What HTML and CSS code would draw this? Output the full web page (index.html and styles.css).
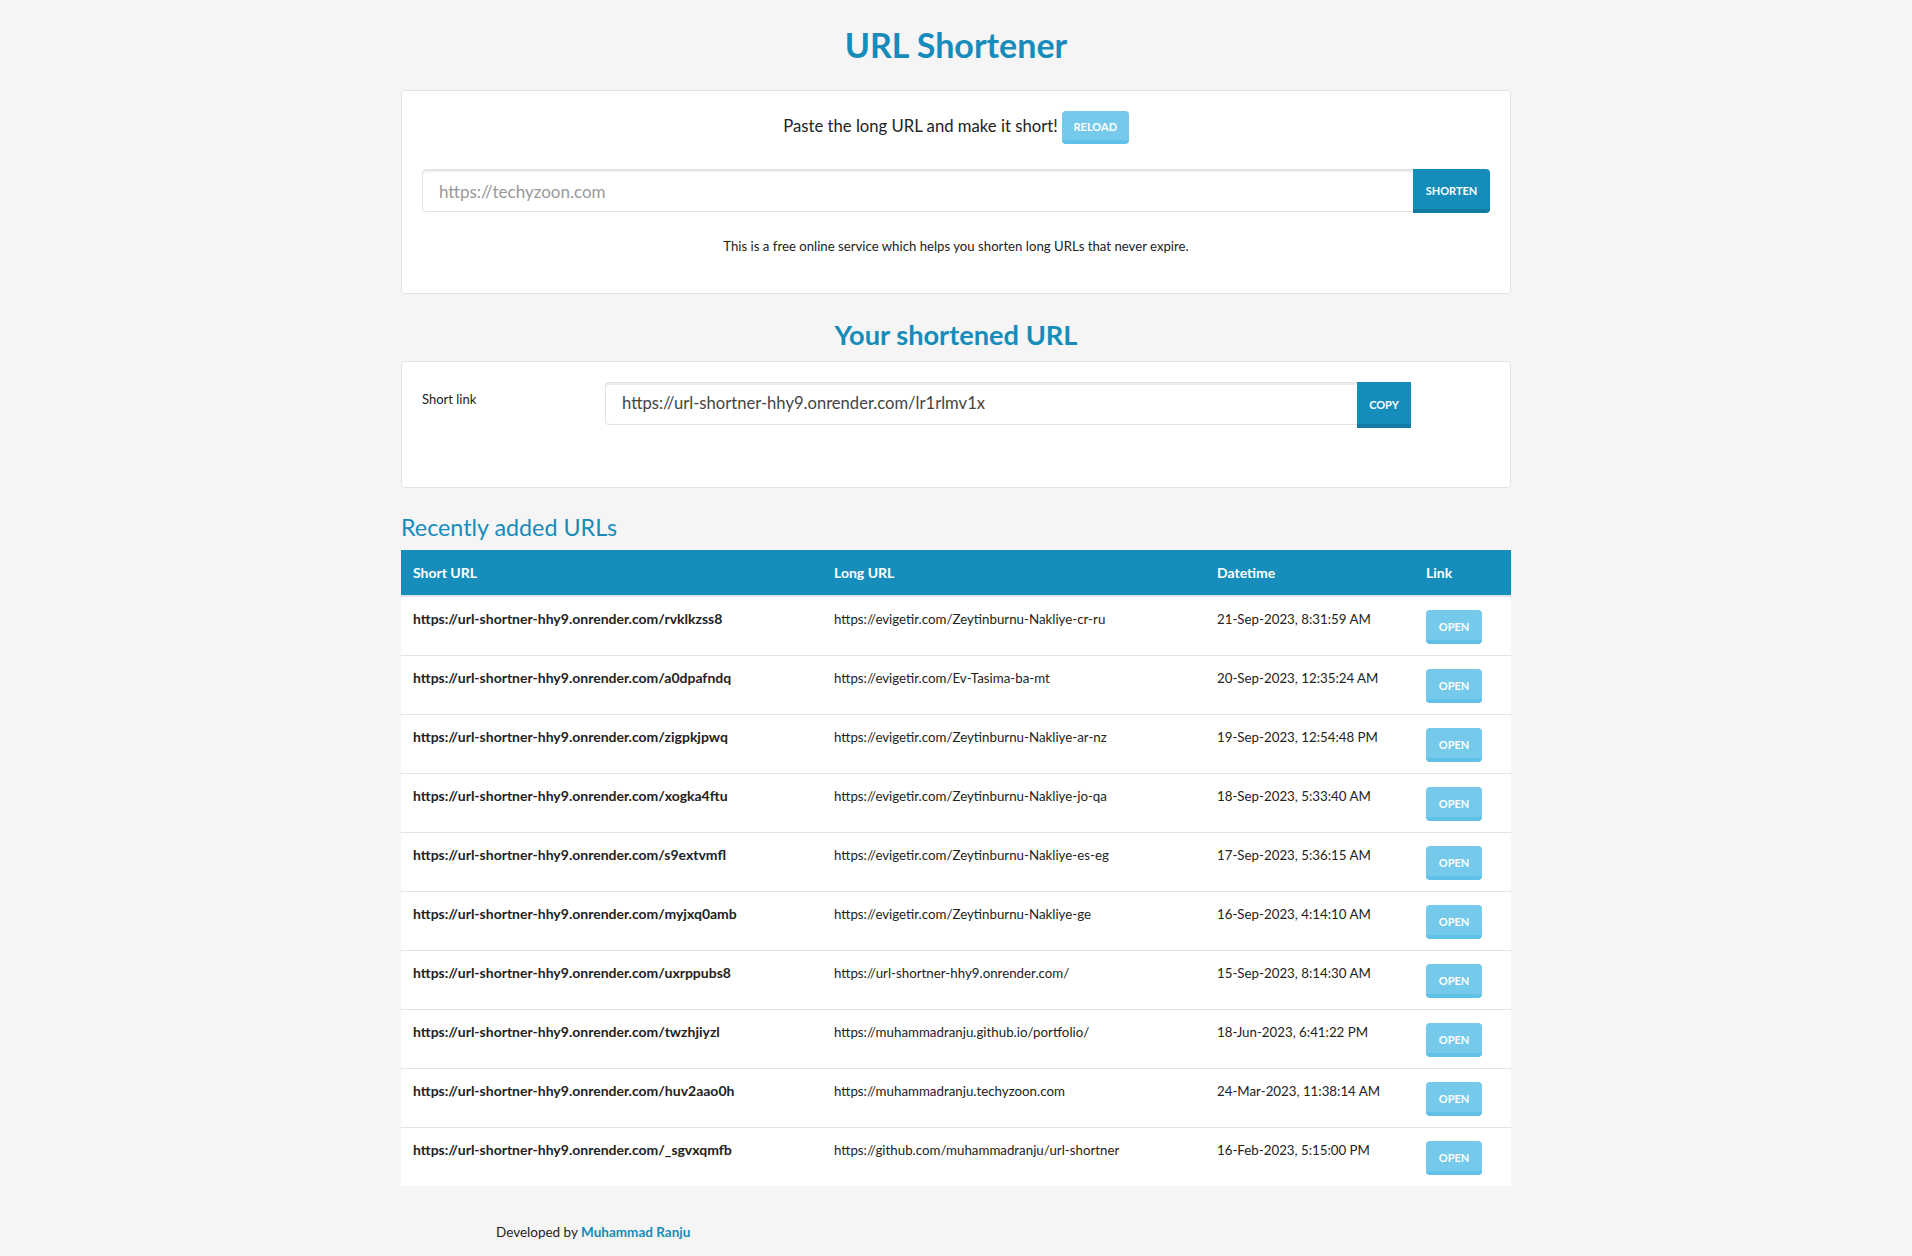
FILE: index.html
```html
<!DOCTYPE html>
<html lang="en">
<head>
<meta charset="utf-8">
<title>URL Shortener</title>
<link rel="stylesheet" href="styles.css">
</head>
<body>
<div class="container">
  <h1 class="title">URL Shortener</h1>

  <div class="card card-main">
    <div class="lead-line">
      <span class="lead-text">Paste the long URL and make it short!</span>
      <button class="btn btn-info btn-sm">Reload</button>
    </div>
    <div class="input-group">
      <input class="form-control" type="text" placeholder="https://techyzoon.com">
      <button class="btn btn-primary btn-append btn-shorten">Shorten</button>
    </div>
    <p class="note">This is a free online service which helps you shorten long URLs that never expire.</p>
  </div>

  <h2 class="subtitle">Your shortened URL</h2>

  <div class="card card-result">
    <div class="result-row">
      <label class="result-label">Short link</label>
      <div class="input-group result-group">
        <input class="form-control result-input" type="text" value="https://url-shortner-hhy9.onrender.com/lr1rlmv1x">
        <button class="btn btn-primary btn-append btn-copy">Copy</button>
      </div>
    </div>
  </div>

  <h3 class="recent">Recently added URLs</h3>

  <table class="table">
    <thead>
      <tr>
        <th class="c1">Short URL</th>
        <th class="c2">Long URL</th>
        <th class="c3">Datetime</th>
        <th class="c4">Link</th>
      </tr>
    </thead>
    <tbody>
      <tr><td class="short">https://url-shortner-hhy9.onrender.com/rvklkzss8</td><td>https://evigetir.com/Zeytinburnu-Nakliye-cr-ru</td><td>21-Sep-2023, 8:31:59 AM</td><td class="link"><button class="btn btn-info btn-open">Open</button></td></tr>
      <tr><td class="short">https://url-shortner-hhy9.onrender.com/a0dpafndq</td><td>https://evigetir.com/Ev-Tasima-ba-mt</td><td>20-Sep-2023, 12:35:24 AM</td><td class="link"><button class="btn btn-info btn-open">Open</button></td></tr>
      <tr><td class="short">https://url-shortner-hhy9.onrender.com/zigpkjpwq</td><td>https://evigetir.com/Zeytinburnu-Nakliye-ar-nz</td><td>19-Sep-2023, 12:54:48 PM</td><td class="link"><button class="btn btn-info btn-open">Open</button></td></tr>
      <tr><td class="short">https://url-shortner-hhy9.onrender.com/xogka4ftu</td><td>https://evigetir.com/Zeytinburnu-Nakliye-jo-qa</td><td>18-Sep-2023, 5:33:40 AM</td><td class="link"><button class="btn btn-info btn-open">Open</button></td></tr>
      <tr><td class="short">https://url-shortner-hhy9.onrender.com/s9extvmfl</td><td>https://evigetir.com/Zeytinburnu-Nakliye-es-eg</td><td>17-Sep-2023, 5:36:15 AM</td><td class="link"><button class="btn btn-info btn-open">Open</button></td></tr>
      <tr><td class="short">https://url-shortner-hhy9.onrender.com/myjxq0amb</td><td>https://evigetir.com/Zeytinburnu-Nakliye-ge</td><td>16-Sep-2023, 4:14:10 AM</td><td class="link"><button class="btn btn-info btn-open">Open</button></td></tr>
      <tr><td class="short">https://url-shortner-hhy9.onrender.com/uxrppubs8</td><td>https://url-shortner-hhy9.onrender.com/</td><td>15-Sep-2023, 8:14:30 AM</td><td class="link"><button class="btn btn-info btn-open">Open</button></td></tr>
      <tr><td class="short">https://url-shortner-hhy9.onrender.com/twzhjiyzl</td><td>https://muhammadranju.github.io/portfolio/</td><td>18-Jun-2023, 6:41:22 PM</td><td class="link"><button class="btn btn-info btn-open">Open</button></td></tr>
      <tr><td class="short">https://url-shortner-hhy9.onrender.com/huv2aao0h</td><td>https://muhammadranju.techyzoon.com</td><td>24-Mar-2023, 11:38:14 AM</td><td class="link"><button class="btn btn-info btn-open">Open</button></td></tr>
      <tr><td class="short">https://url-shortner-hhy9.onrender.com/_sgvxqmfb</td><td>https://github.com/muhammadranju/url-shortner</td><td>16-Feb-2023, 5:15:00 PM</td><td class="link"><button class="btn btn-info btn-open">Open</button></td></tr>
    </tbody>
  </table>

  <footer class="footer">Developed by <a class="author" href="#">Muhammad Ranju</a></footer>
</div>
</body>
</html>
```

FILE: styles.css
```css
* { box-sizing: border-box; }

html, body {
  margin: 0;
  padding: 0;
}

body {
  background: #f5f5f5;
  color: #222;
  font-family: Lato, "Noto Sans", sans-serif;
  font-size: 14px;
  line-height: 1.5;
}

.container {
  width: 1110px;
  margin: 0 auto;
}

.title {
  margin: 0;
  padding-top: 23px;
  height: 90px;
  text-align: center;
  color: #158cba;
  font-size: 34px;
  font-weight: 700;
  line-height: 44px;
}

.card {
  background: #fff;
  border: 1px solid #e2e2e2;
  border-radius: 4px;
}

.card-main {
  height: 204px;
  padding: 20px;
}

.lead-line {
  display: flex;
  justify-content: center;
  align-items: center;
  gap: 4px;
  height: 33px;
}

.lead-text {
  font-size: 16.7px;
  line-height: 33px;
  margin-top: -2px;
}

.btn {
  font-family: inherit;
  font-weight: 700;
  text-transform: uppercase;
  color: #fff;
  border: none;
  border-radius: 4px;
  cursor: pointer;
  padding: 0;
  line-height: 1;
}

.btn-info {
  background: #75caeb;
  border-bottom: 4px solid #5fc1e8;
}

.btn-primary {
  background: #158cba;
  border-bottom: 4px solid #127ba3;
}

.btn-sm {
  width: 67px;
  height: 33px;
  font-size: 11px;
  padding-top: 2px;
}

.input-group {
  display: flex;
  margin-top: 25px;
}

.form-control {
  flex: 1;
  height: 43px;
  border: 1px solid #e2e2e2;
  border-right: none;
  border-radius: 4px 0 0 4px;
  box-shadow: inset 0 2px 0 rgba(0, 0, 0, 0.075);
  padding: 2px 16px 0;
  font-family: inherit;
  font-size: 17px;
  color: #555;
  background: #fff;
  outline: none;
}

.form-control::placeholder {
  color: #999;
}

.btn-append {
  height: 44px;
  border-radius: 0 4px 4px 0;
  font-size: 11px;
  padding-top: 2px;
}

.btn-shorten {
  width: 77px;
}

.note {
  margin: 23px 0 0;
  text-align: center;
  font-size: 13.2px;
  line-height: 20px;
}

.subtitle {
  margin: 0;
  height: 67px;
  padding-top: 23px;
  text-align: center;
  color: #158cba;
  font-size: 27.2px;
  font-weight: 700;
  line-height: 36px;
}

.card-result {
  height: 127px;
  padding: 20px;
}

.result-row {
  display: flex;
  align-items: flex-start;
}

.result-label {
  width: 183px;
  padding-top: 7px;
  font-size: 13px;
  line-height: 20px;
}

.result-group {
  margin-top: 0;
  width: 806px;
}

.result-input {
  font-size: 16.6px;
  color: #444;
  padding-top: 0;
  padding-bottom: 1px;
}

.btn-copy {
  width: 54px;
  height: 46px;
  border-radius: 0;
}

.recent {
  margin: 0;
  height: 62px;
  padding-top: 23px;
  color: #158cba;
  font-size: 23.3px;
  font-weight: 400;
  line-height: 32px;
}

.table {
  width: 1110px;
  border-collapse: collapse;
  background: #fff;
  table-layout: fixed;
}

.table th {
  background: #178dbb;
  color: #fff;
  text-align: left;
  font-size: 14px;
  font-weight: 700;
  padding: 12px;
  line-height: 21px;
  border-bottom: 2px solid #dee2e6;
}

.table td {
  padding: 12px;
  vertical-align: top;
  font-size: 13.3px;
  line-height: 20px;
  border-top: 1px solid #e3e3e8;
}

.table tbody tr:first-child td {
  border-top: none;
}

.table td.link {
  padding: 13px 12px 11px;
}

.table td.short {
  font-weight: 700;
  font-size: 14px;
}

.c1 { width: 421px; }
.c2 { width: 383px; }
.c3 { width: 209px; }
.c4 { width: 97px; }

.btn-open {
  width: 56px;
  height: 34px;
  font-size: 11px;
  padding-top: 3px;
  display: block;
}

.footer {
  padding: 36px 0 0 95px;
  font-size: 13.5px;
  line-height: 20px;
  height: 70px;
}

.author {
  color: #158cba;
  font-weight: 700;
  text-decoration: none;
}
```
